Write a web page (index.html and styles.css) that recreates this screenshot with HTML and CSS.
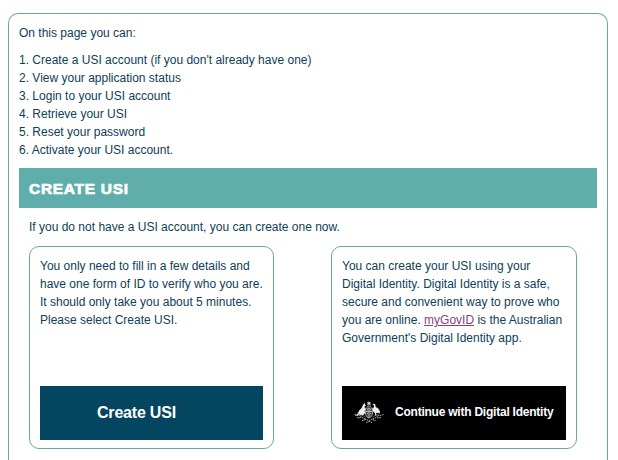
FILE: index.html
```
<!DOCTYPE html>
<html lang="en">
<head>
    <meta charset="UTF-8">
    <meta name="viewport" content="width=device-width, initial-scale=1.0">
    <title>Create USI</title>
    <link rel="stylesheet" href="styles.css">
</head>
<body>
    <main class="panel">
        <p>On this page you can:</p>
        <ol class="options">
            <li>Create a USI account (if you don't already have one)</li>
            <li>View your application status</li>
            <li>Login to your USI account</li>
            <li>Retrieve your USI</li>
            <li>Reset your password</li>
            <li>Activate your USI account.</li>
        </ol>
        <h2 class="banner">CREATE USI</h2>
        <section class="create">
            <p>If you do not have a USI account, you can create one now.</p>
            <div class="cards">
                <div class="card">
                    <p>You only need to fill in a few details and<br>have one form of ID to verify who you are.<br>It should only take you about 5 minutes.<br>Please select Create USI.</p>
                    <button class="btn btn-create">Create USI</button>
                </div>
                <div class="card card-identity">
                    <p>You can create your USI using your<br>Digital Identity. Digital Identity is a safe,<br>secure and convenient way to prove who<br>you are online. <a href="#">myGovID</a> is the Australian<br>Government's Digital Identity app.</p>
                    <button class="btn btn-identity">
                        <svg class="crest" viewBox="0 0 30 24" width="30" height="24" aria-hidden="true">
                            <!-- star -->
                            <path d="M15 1l.6 1.4 1.5-.2-.9 1.2.8 1.3-1.5-.3-.5 1.4-.6-1.4-1.5.3.8-1.3-.9-1.2 1.6.2z" fill="#ddd"/>
                            <!-- kangaroo -->
                            <path d="M9.5 4l1.2-1 .3 1.5 1 1.2-1.4.6.3 2.2 1.6 1.2-1.8.4.3 3.2-1.7 1.6-2.6.4-1.5-.9-2.2 1.3-2 .2 2.6-2.2 1.6-3.2 2.4-2.5z" fill="#eee"/>
                            <!-- emu -->
                            <path d="M18.2 4.6l1.8-1 1.3.8.4 2.6 2.3 1.2 1.8 2.7.2 2.6-2-.8-2 .6.4 2.6-1-.2-.6-2.6-2-1.8-.3-2.6 1.5-1.8-.2-2z" fill="#eee"/>
                            <!-- shield -->
                            <path d="M11.5 8h7v6.5q-.7 2.5-3.5 3.8-2.8-1.3-3.5-3.8z" fill="#444" stroke="#bbb" stroke-width=".8"/>
                            <path d="M12 11.5h6M15 8v9.5M13 6.2h4M13 9.8h1M16.2 9.8h1M13 13.5h1M16.2 13.5h1" fill="none" stroke="#ccc" stroke-width=".8"/>
                            <!-- wattle and scroll -->
                            <path d="M.5 14.5l4 1.2 3-1 3 1.8M29.5 14.5l-4 1.2-3-1-3 1.8M3 17.8l4-.8 4 1.8M27 17.8l-4-.8-4 1.8M8 20.5l4-1.2 3 1.6 3-1.6 4 1.2M12 22.5l3-1 3 1" fill="none" stroke="#aaa" stroke-width="1" stroke-dasharray="1.7 .7"/>
                            <path d="M3 12.5l2 2M26 12.5l-1.5 2M5.5 18.8l2-2.8M24.5 18.8l-2-2.8M10 21l1.5-3.5M20 21l-1.5-3.5" fill="none" stroke="#777" stroke-width=".8"/>
                        </svg>
                        <span>Continue with Digital Identity</span>
                    </button>
                </div>
            </div>
        </section>
    </main>
</body>
</html>
```
FILE: styles.css
```
body {
    margin: 0;
    padding: 13px 10px 0 8px;
    background-color: #fff;
    color: #0e4058;
    font-family: "Liberation Sans", Arial, sans-serif;
    font-size: 12px;
    line-height: 18px;
}
p {
    margin: 0;
}
.panel {
    box-sizing: border-box;
    width: 600px;
    height: 447px;
    padding: 10px 10px 0;
    border: 1px solid #6aa6a9;
    border-bottom: none;
    border-radius: 10px 10px 0 0;
}
.options {
    margin: 9px 0;
    padding: 0;
    list-style-type: none;
    counter-reset: option;
}
.options li {
    counter-increment: option;
}
.options li::before {
    content: counter(option) ". ";
}
.banner {
    margin: 0;
    padding: 0 10px;
    background-color: #60aeac;
    color: #fff;
    font-size: 15.5px;
    font-weight: 900;
    line-height: 41px;
    height: 40px;
    letter-spacing: 0.7px;
    -webkit-text-stroke: 0.7px #fff;
}
.create {
    padding: 10px 10px 0;
}
.cards {
    display: flex;
    gap: 57px;
    margin-top: 10px;
}
.card {
    display: flex;
    flex-direction: column;
    justify-content: space-between;
    box-sizing: border-box;
    width: 245px;
    height: 203px;
    padding: 10px 10px 8px;
    border: 1px solid #6aa6a9;
    border-radius: 10px;
    white-space: nowrap;
}
.card-identity {
    width: 246px;
}
.card a {
    color: #8a3f86;
}
.btn {
    display: flex;
    align-items: center;
    height: 54px;
    padding: 0;
    border: none;
    color: #fff;
    font-family: inherit;
    font-weight: bold;
    cursor: pointer;
}
.btn-create {
    padding-left: 57px;
    background-color: #04465f;
    font-size: 16px;
    letter-spacing: -0.2px;
}
.btn-identity {
    padding: 0 0 2px 12px;
    gap: 11px;
    background-color: #000;
    font-size: 12px;
    letter-spacing: -0.23px;
}
```
